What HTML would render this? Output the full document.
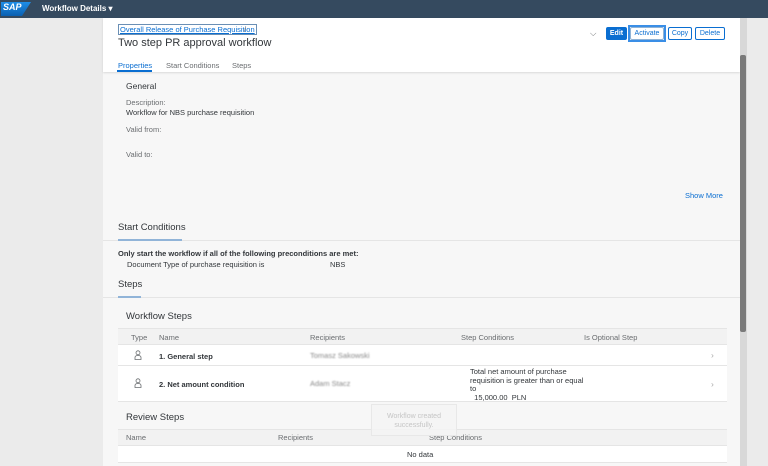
<!DOCTYPE html>
<html><head><meta charset="utf-8"><style>
*{margin:0;padding:0;box-sizing:border-box}
body{width:768px;height:466px;overflow:hidden;background:#ebebeb;font-family:"Liberation Sans",sans-serif;position:relative;color:#32363a}
.a{position:absolute;white-space:nowrap}
.bar{left:0;top:0;width:768px;height:18px;background:#354a5f}
.page{left:103px;top:18px;width:637px;height:448px;background:#f7f7f7}
.hdr{left:103px;top:18px;width:637px;height:54px;background:#fff;box-shadow:0 1px 2px rgba(0,0,0,.12)}
.f7{font-size:7.5px}.f8{font-size:8.5px}.f9{font-size:9.5px}
.btn{position:absolute;top:27px;height:13px;font-size:7px;border:1px solid #0a6ed1;border-radius:2px;color:#0a6ed1;background:#fff;text-align:center;line-height:11px}
.tbl{left:118px;width:609px;background:#fff;border-bottom:1px solid #e5e5e5}
</style></head><body>
<div class="a bar"></div>
<div class="a" style="left:1px;top:2px;width:30px;height:14px;background:linear-gradient(180deg,#1f8ee8,#0a5fb0);clip-path:polygon(0 0,100% 0,70% 100%,0 100%)"></div>
<div class="a" style="left:3px;top:2px;color:#fff;font-weight:bold;font-size:9px;font-style:italic">SAP</div>
<div class="a" style="left:42px;top:4px;color:#fff;font-weight:bold;font-size:8px">Workflow Details ▾</div>
<div class="a page"></div>
<div class="a hdr"></div>
<div class="a f7" style="left:118px;top:24px;color:#0a6ed1;text-decoration:underline;border:1px solid #6a8fb5;padding:0 1px">Overall Release of Purchase Requisition</div>
<div class="a f7" style="left:244px;top:25px;color:#6a6d70">/</div>
<div class="a" style="left:118px;top:37px;font-size:11px">Two step PR approval workflow</div>
<div class="a f8" style="left:590px;top:28px;color:#6a6d70">⌵</div>
<div class="btn" style="left:606px;width:21px;background:#0a6ed1;color:#fff;font-weight:bold">Edit</div>
<div class="a" style="left:628px;top:25px;width:38px;height:17px;border:2px solid #3a8ee6"></div>
<div class="btn" style="left:630px;width:34px;border-color:#8fb3d6">Activate</div>
<div class="btn" style="left:668px;width:24px">Copy</div>
<div class="btn" style="left:695px;width:30px">Delete</div>
<div class="a f7" style="left:118px;top:61px;color:#0a6ed1">Properties</div>
<div class="a" style="left:117px;top:70px;width:35px;height:2px;background:#0a6ed1"></div>
<div class="a f7" style="left:166px;top:61px;color:#6a6d70">Start Conditions</div>
<div class="a f7" style="left:232px;top:61px;color:#6a6d70">Steps</div>
<div class="a f8" style="left:126px;top:81px">General</div>
<div class="a f7" style="left:126px;top:98px;color:#6a6d70">Description:</div>
<div class="a f7" style="left:126px;top:108px">Workflow for NBS purchase requisition</div>
<div class="a f7" style="left:126px;top:125px;color:#6a6d70">Valid from:</div>
<div class="a f7" style="left:126px;top:150px;color:#6a6d70">Valid to:</div>
<div class="a f7" style="left:685px;top:191px;color:#0a6ed1">Show More</div>
<div class="a f9" style="left:118px;top:222px">Start Conditions</div>
<div class="a" style="left:103px;top:240px;width:637px;height:1px;background:#e5e5e5"></div>
<div class="a" style="left:118px;top:239px;width:64px;height:2px;background:#91b4d8"></div>
<div class="a f7" style="left:118px;top:249px;font-weight:bold">Only start the workflow if all of the following preconditions are met:</div>
<div class="a f7" style="left:127px;top:260px">Document Type of purchase requisition is</div>
<div class="a f7" style="left:330px;top:260px">NBS</div>
<div class="a f9" style="left:118px;top:279px">Steps</div>
<div class="a" style="left:103px;top:297px;width:637px;height:1px;background:#e5e5e5"></div>
<div class="a" style="left:118px;top:296px;width:23px;height:2px;background:#91b4d8"></div>
<div class="a f9" style="left:126px;top:311px">Workflow Steps</div>
<div class="a tbl" style="top:328px;height:17px;background:#f2f2f2;border-top:1px solid #e5e5e5"></div>
<div class="a f7" style="left:131px;top:333px;color:#6a6d70">Type</div>
<div class="a f7" style="left:159px;top:333px;color:#6a6d70">Name</div>
<div class="a f7" style="left:310px;top:333px;color:#6a6d70">Recipients</div>
<div class="a f7" style="left:461px;top:333px;color:#6a6d70">Step Conditions</div>
<div class="a f7" style="left:584px;top:333px;color:#6a6d70">Is Optional Step</div>
<div class="a tbl" style="top:345px;height:21px"></div>
<svg class="a" style="left:134px;top:350px" width="8" height="10" viewBox="0 0 8 10"><circle cx="4" cy="2.8" r="2" fill="none" stroke="#6a6d70" stroke-width=".8"/><path d="M1 9.5V7.5Q1 5.5 4 5.5Q7 5.5 7 7.5V9.5Z" fill="none" stroke="#6a6d70" stroke-width=".8"/></svg>
<div class="a f7" style="left:159px;top:352px;font-weight:bold">1. General step</div>
<div class="a f7" style="left:310px;top:351px;color:#888;filter:blur(.8px)">Tomasz Sakowski</div>
<div class="a f8" style="left:711px;top:350px;color:#aaa">›</div>
<div class="a tbl" style="top:366px;height:36px"></div>
<svg class="a" style="left:134px;top:378px" width="8" height="10" viewBox="0 0 8 10"><circle cx="4" cy="2.8" r="2" fill="none" stroke="#6a6d70" stroke-width=".8"/><path d="M1 9.5V7.5Q1 5.5 4 5.5Q7 5.5 7 7.5V9.5Z" fill="none" stroke="#6a6d70" stroke-width=".8"/></svg>
<div class="a f7" style="left:159px;top:380px;font-weight:bold">2. Net amount condition</div>
<div class="a f7" style="left:310px;top:379px;color:#888;filter:blur(.8px)">Adam Stacz</div>
<div class="a f7" style="left:470px;top:368px;line-height:8.5px">Total net amount of purchase<br>requisition is greater than or equal<br>to<br>&nbsp; 15,000.00&nbsp; PLN</div>
<div class="a f8" style="left:711px;top:379px;color:#aaa">›</div>
<div class="a f9" style="left:126px;top:412px">Review Steps</div>
<div class="a tbl" style="top:429px;height:17px;background:#f2f2f2;border-top:1px solid #e5e5e5"></div>
<div class="a f7" style="left:126px;top:433px;color:#6a6d70">Name</div>
<div class="a f7" style="left:278px;top:433px;color:#6a6d70">Recipients</div>
<div class="a f7" style="left:429px;top:433px;color:#6a6d70">Step Conditions</div>
<div class="a tbl" style="top:446px;height:17px"></div>
<div class="a f7" style="left:407px;top:450px">No data</div>
<div class="a" style="left:371px;top:404px;width:86px;height:32px;background:rgba(245,245,245,.85);border:1px solid #e8e8e8;color:#c5c5c5;font-size:7px;text-align:center;padding-top:7px;line-height:9px">Workflow created<br>successfully.</div>
<div class="a" style="left:740px;top:18px;width:7px;height:448px;background:#d8d8d8"></div>
<div class="a" style="left:740px;top:55px;width:6px;height:277px;background:#7a7a7a;border-radius:2px"></div>
</body></html>
